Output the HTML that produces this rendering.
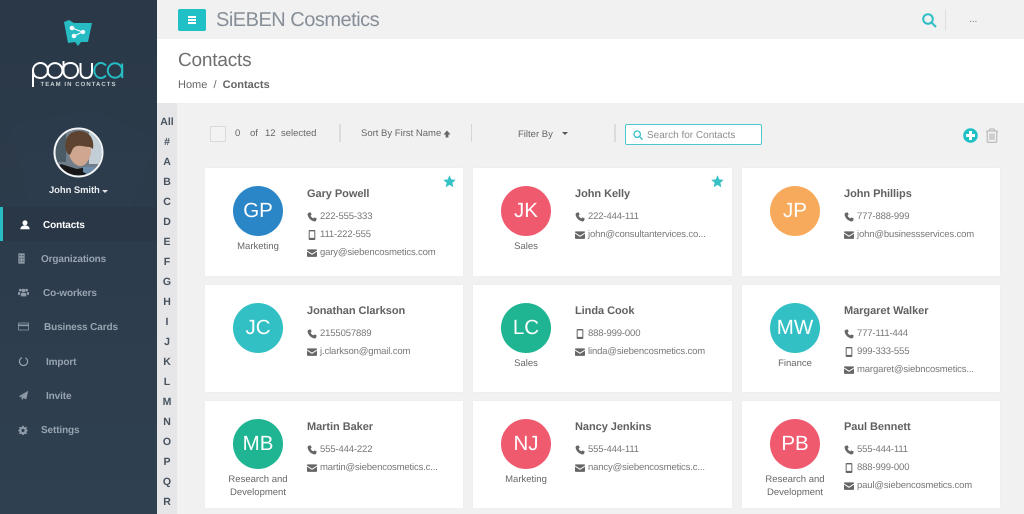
<!DOCTYPE html>
<html lang="en"><head><meta charset="utf-8"><title>Contacts</title>
<style>
*{box-sizing:border-box}
html,body{margin:0;padding:0;width:1024px;height:514px;overflow:hidden;background:#f1f1f1;font-family:"Liberation Sans",sans-serif;color:#666;text-rendering:geometricPrecision}
.a{position:absolute;white-space:nowrap}
#side{position:absolute;left:0;top:0;width:157px;height:514px;background:linear-gradient(#2a3847,#2f4051)}
.nav{position:absolute;left:0;width:157px;height:34px;line-height:34px;font-size:10px;font-weight:bold;color:#98a4b0;letter-spacing:-.12px}
.nav span{position:absolute;top:0}
.nav svg{position:absolute;left:18px;top:11px;width:11px;height:11px;fill:#8f9ba7}
#alpha{position:absolute;left:157px;top:103px;width:20px;height:411px;background:#e6e6e9}
#alpha div{position:absolute;left:0;width:20px;text-align:center;font-size:10.5px;font-weight:bold;color:#46525e;line-height:14px}
.card{position:absolute;width:258px;height:108px;background:#fff;box-shadow:0 0 1px #e4e4e4}
.av{position:absolute;left:28px;top:18px;width:50px;height:50px;border-radius:50%;color:#fff;text-align:center;line-height:50px;font-size:20.5px}
.dep{position:absolute;left:3px;width:100px;top:72px;text-align:center;font-size:9.5px;line-height:13px;color:#666}
.nm{position:absolute;left:102px;top:19.5px;font-size:11px;font-weight:bold;color:#616161;white-space:nowrap;letter-spacing:-.05px}
.ln{position:absolute;left:102px;font-size:9.5px;color:#777;white-space:nowrap;padding-left:13px;line-height:13px;letter-spacing:-.14px}
.ln svg{position:absolute;left:0;top:2px;width:10px;height:10px;fill:#666}
.st{position:absolute;left:238px;top:7px;width:13px;height:13px;fill:#35c1c6}
</style></head><body>
<svg width="0" height="0" style="position:absolute">
<symbol id="p" viewBox="0 0 12 12"><path d="M2.600.7 4.400.4 5.600 3.200 4.300 4.300C4.900 5.700 6.100 7 7.600 7.700L8.800 6.400 11.600 7.600 11.200 9.600C11 10.800 10 11.500 8.900 11.300 4.600 10.600 1.200 7 .7 3 .6 1.900 1.400 1 2.600.7Z"/></symbol>
<symbol id="m" viewBox="0 0 12 12"><path fill-rule="evenodd" d="M3.200 0H8.800C9.600 0 10 .5 10 1.200V10.800C10 11.500 9.600 12 8.800 12H3.200C2.400 12 2 11.500 2 10.800V1.200C2 .5 2.400 0 3.200 0ZM3.200 1.600V9.400H8.800V1.600Z"/></symbol>
<symbol id="e" viewBox="0 0 12 12"><path d="M0 2.600C0 2 .4 1.600 1 1.600H11C11.600 1.600 12 2 12 2.600V3L6 6.800 0 3ZM0 4.400 6 8.200 12 4.400V9.600C12 10.200 11.600 10.600 11 10.600H1C.4 10.600 0 10.200 0 9.600Z"/></symbol>
<symbol id="s" viewBox="0 0 14 14"><path d="M7 .3 8.900 4.700 13.700 5.200 10.100 8.400 11.100 13.200 7 10.700 2.900 13.200 3.900 8.400.3 5.200 5.100 4.700Z"/></symbol>
</svg>

<div id="side">
 <svg class="a" style="left:10px;top:110px" width="147" height="100" viewBox="0 0 147 100"><path d="M0 14 85 0 147 30 120 100H20Z" fill="#2f3f4f" opacity=".35"/><path d="M0 14 50 100M85 0 60 100M147 30 60 70" stroke="#2d3c4b" fill="none"/></svg>
 <svg class="a" style="left:62px;top:19px" width="34" height="28" viewBox="0 0 34 28"><path d="M2 3 7 1 12 4 30 4 26 23 19 23 16 27 13 23 6 24Z" fill="#27bcc4"/><g stroke="#fff" stroke-width="1" fill="#fff"><path d="M10 9 20.500 13 12 17" fill="none"/><circle cx="10" cy="9" r="1.800"/><circle cx="21" cy="13" r="1.600"/><circle cx="12" cy="17" r="1.800"/></g></svg>
 <svg class="a" style="left:32px;top:59px" width="94" height="30" viewBox="0 0 94 30" fill="none" stroke-width="2"><g stroke="#fff"><path d="M1 28V11.500C1 7 4.500 4 8.500 4S16 7.500 16 11.500 12.500 19 8.500 19 1.500 17 1.200 13"/><circle cx="23" cy="11.500" r="7.400"/><path d="M31.500 2V12C31.500 16.500 34.500 19 38.500 19S46 16 46 11.500 43 4 38.500 4 32.500 6 32 8"/><path d="M48.500 4V12C48.500 16.500 50.500 19 54.300 19S60 16.500 60 12V4"/></g><g stroke="#27bcc4"><path d="M74 6.500C72.500 5 71 4 69 4 65 4 62.300 7.500 62.300 11.500S65 19 69 19C71 19 72.500 18 74 16.500"/><circle cx="83" cy="11.500" r="7.200"/><path d="M90.200 4.500V19"/></g></svg>
 <div class="a" style="left:0;width:157px;top:82px;text-align:center;font-size:6px;line-height:7px;font-weight:bold;letter-spacing:1.050px;color:#c9d0d6">TEAM IN CONTACTS</div>
 <svg class="a" style="left:53px;top:127px" width="51" height="51" viewBox="0 0 51 51"><defs><clipPath id="c"><circle cx="25.500" cy="25.500" r="23"/></clipPath></defs><g clip-path="url(#c)"><rect width="51" height="51" fill="#6f7e8a"/><rect x="36" y="5" width="15" height="32" fill="#c3ced6"/><rect x="0" y="5" width="13" height="30" fill="#4c5c66"/><path d="M0 51V44L8 37 24 42 34 40 51 48V51Z" fill="#17171a"/><path d="M30 40 42 40 38 49 30 45Z" fill="#6d8cab"/><path d="M15 18C14 28 19 37 26 39 32 40 36 34 38 26L38 15Z" fill="#cfa68f"/><path d="M14 26C10 16 13 6 24 4 33 3 42 9 40 22L37 20C32 20 28 18 24 19 19 20 19 25 17 28Z" fill="#5f4331"/></g><circle cx="25.500" cy="25.500" r="24" fill="none" stroke="#f3f5f6" stroke-width="2"/></svg>
 <div class="a" style="left:49px;top:185px;font-size:9.500px;line-height:12px;font-weight:bold;color:#e9ecef;letter-spacing:-.1px">John Smith</div>
 <div class="a" style="left:102px;top:190px;border:3px solid transparent;border-top-color:#dfe3e6;border-bottom:0"></div>

 <div class="a" style="left:0;top:207px;width:157px;height:34px;background:#293746"></div>
 <div class="a" style="left:0;top:207px;width:3px;height:34px;background:#27bcc4"></div>
 <div class="nav" style="top:208.500px;color:#fff"><svg viewBox="0 0 14 14" style="left:20px;width:10px;height:10px;top:11px;fill:#fff"><circle cx="7" cy="4" r="3.500"/><path d="M.5 13C.5 9 4 7.500 7 7.500S13.500 9 13.500 13Z"/></svg><span style="left:43px">Contacts</span></div>
 <div class="nav" style="top:243px"><svg viewBox="0 0 14 14" style="left:16px;top:10px"><path fill-rule="evenodd" d="M3 .5H11V13.500H3ZM4.500 2.500V4H6V2.500ZM8 2.500V4H9.500V2.500ZM4.500 6V7.500H6V6ZM8 6V7.500H9.500V6ZM4.500 9.500V11H6V9.500ZM8 9.500V11H9.500V9.500Z"/></svg><span style="left:41px">Organizations</span></div>
 <div class="nav" style="top:277px"><svg viewBox="0 0 14 14" style="top:10px"><circle cx="3" cy="4" r="1.800"/><circle cx="11" cy="4" r="1.800"/><circle cx="7" cy="4.500" r="2.300"/><path d="M0 6.500H2.500L2.500 10H0ZM11.500 6.500H14V10H11.500ZM3.500 7.500H10.500V12H3.500Z"/></svg><span style="left:43px">Co-workers</span></div>
 <div class="nav" style="top:311px"><svg viewBox="0 0 14 14" style="top:10px"><path fill-rule="evenodd" d="M1 2H13C13.600 2 14 2.400 14 3V11C14 11.600 13.600 12 13 12H1C.4 12 0 11.600 0 11V3C0 2.400.4 2 1 2ZM1 3V4.500H13V3ZM1 6.500V11H13V6.500Z"/></svg><span style="left:44px">Business Cards</span></div>
 <div class="nav" style="top:345.500px"><svg viewBox="0 0 14 14" style="top:10px;fill:none;stroke:#98a4b0;stroke-width:1.500"><path d="M5 2.200A5.200 5.200 0 1 0 9.500 2.400"/></svg><span style="left:46px">Import</span></div>
 <div class="nav" style="top:380px"><svg viewBox="0 0 14 14" style="top:10px"><path d="M13 1 10.500 12 7 10.300 5 13 4.500 9ZM13 1 1 8 4 9.300Z"/></svg><span style="left:46px">Invite</span></div>
 <div class="nav" style="top:414px"><svg viewBox="0 0 14 14" style="width:10px;height:10px;top:11px"><path fill-rule="evenodd" d="M6 1H8L8.400 2.700 9.800 3.300 11.300 2.400 12.600 3.700 11.700 5.200 12.300 6.600 13.500 7V8.500L12.300 9 11.700 10.300 12.600 11.800 11.300 13 9.800 12.200 8.400 12.800 8 14H6L5.600 12.800 4.200 12.200 2.700 13 1.400 11.800 2.300 10.300 1.700 9 .5 8.500V7L1.700 6.600 2.300 5.200 1.400 3.700 2.700 2.400 4.200 3.300 5.600 2.700ZM7 5.500A2.200 2.200 0 1 0 7 9.900 2.200 2.200 0 1 0 7 5.500Z"/></svg><span style="left:41px">Settings</span></div>
</div>

<!-- top bar -->
<div class="a" style="left:178px;top:9px;width:28px;height:22px;background:#20c1c6;border-radius:2px"></div>
<div class="a" style="left:188px;top:16px;width:8px;height:1.500px;background:#fff;box-shadow:0 3px 0 #fff,0 6px 0 #fff"></div>
<div class="a" style="left:216px;top:6px;font-size:20px;line-height:28px;color:#868e98;letter-spacing:-.5px">SiEBEN Cosmetics</div>
<svg class="a" style="left:921px;top:12px" width="16" height="16" viewBox="0 0 16 16" fill="none" stroke="#2fbfc6" stroke-width="2"><circle cx="7" cy="7" r="4.800"/><path d="M10.500 10.500 15 15"/></svg>
<div class="a" style="left:945px;top:9px;width:1px;height:21px;background:#dedede"></div>
<div class="a" style="left:969px;top:13px;font-size:10px;line-height:14px;color:#777">...</div>

<!-- heading -->
<div class="a" style="left:157px;top:39px;width:867px;height:64px;background:#fff"></div>
<div class="a" style="left:178px;top:48px;font-size:19px;line-height:26px;color:#707070;letter-spacing:-.2px">Contacts</div>
<div class="a" style="left:178px;top:78px;font-size:11px;line-height:15px;color:#666">Home&nbsp; /&nbsp; <b>Contacts</b></div>

<div id="alpha">
<div style="top:12px">All</div><div style="top:32px">#</div><div style="top:52px">A</div><div style="top:72px">B</div><div style="top:92px">C</div><div style="top:112px">D</div><div style="top:132px">E</div><div style="top:152px">F</div><div style="top:172px">G</div><div style="top:192px">H</div><div style="top:212px">I</div><div style="top:232px">J</div><div style="top:252px">K</div><div style="top:272px">L</div><div style="top:292px">M</div><div style="top:312px">N</div><div style="top:332px">O</div><div style="top:352px">P</div><div style="top:372px">Q</div><div style="top:392px">R</div>
</div>

<!-- toolbar -->
<div class="a" style="left:210px;top:126px;width:16px;height:16px;border:1px solid #d9d9d9;background:#f3f3f3"></div>
<div class="a" style="left:235px;top:127px;font-size:9.500px;line-height:13px;color:#666">0</div>
<div class="a" style="left:250px;top:127px;font-size:9.500px;line-height:13px;color:#666">of</div>
<div class="a" style="left:265px;top:127px;font-size:9.500px;line-height:13px;color:#666">12</div>
<div class="a" style="left:281px;top:127px;font-size:9.500px;line-height:13px;color:#666">selected</div>
<div class="a" style="left:339px;top:124px;width:1.500px;height:18px;background:#dcdcdc"></div>
<div class="a" style="left:361px;top:127px;font-size:9.500px;line-height:13px;color:#666">Sort By First Name</div>
<svg class="a" style="left:443px;top:130px" width="8" height="8" viewBox="0 0 8 8" fill="#666"><path d="M4 .5 7.500 4.500H5.400V7.500H2.600V4.500H.5Z"/></svg>
<div class="a" style="left:471px;top:124px;width:1px;height:18px;background:#d5d5d5"></div>
<div class="a" style="left:518px;top:128px;font-size:9.500px;line-height:13px;color:#666">Filter By</div>
<div class="a" style="left:562px;top:132px;border:3px solid transparent;border-top:3.500px solid #555;border-bottom:0"></div>
<div class="a" style="left:614px;top:124px;width:1.500px;height:18px;background:#dcdcdc"></div>
<div class="a" style="left:625px;top:124px;width:137px;height:21px;background:#fff;border:1px solid #4fc7cd;border-radius:2px"></div>
<svg class="a" style="left:633px;top:130px" width="10" height="10" viewBox="0 0 10 10" fill="none" stroke="#2fbfc6" stroke-width="1.300"><circle cx="4.200" cy="4.200" r="3.200"/><path d="M6.500 6.500 9.500 9.500"/></svg>
<div class="a" style="left:647px;top:129px;font-size:10px;line-height:13px;color:#8d8d8d">Search for Contacts</div>
<svg class="a" style="left:963px;top:128px" width="15" height="15" viewBox="0 0 15 15"><circle cx="7.500" cy="7.500" r="7.300" fill="#20c1c6"/><path d="M6 3H9V6H12V9H9V12H6V9H3V6H6Z" fill="#fff"/></svg>
<svg class="a" style="left:985px;top:128px" width="14" height="15" viewBox="0 0 14 15" fill="none" stroke="#b4b4b4" stroke-width="1.100"><path d="M1 3H13M4.500 3 5 1H9L9.500 3M2.200 3V13C2.200 13.800 2.700 14.300 3.300 14.300H10.700C11.300 14.300 11.800 13.800 11.800 13V3M5 5.500V12M7 5.500V12M9 5.500V12"/></svg>

<!-- cards -->
<div class="card" style="left:205px;top:168px"><div class="av" style="background:#2a86c6">GP</div><div class="dep">Marketing</div><div class="nm">Gary Powell</div><svg class="st"><use href="#s"/></svg>
<div class="ln" style="top:42px"><svg><use href="#p"/></svg>222-555-333</div><div class="ln" style="top:60px"><svg><use href="#m"/></svg>111-222-555</div><div class="ln" style="top:78px"><svg><use href="#e"/></svg>gary@siebencosmetics.com</div></div>

<div class="card" style="left:473px;top:168px;width:259px"><div class="av" style="background:#ef5a6f">JK</div><div class="dep">Sales</div><div class="nm">John Kelly</div><svg class="st"><use href="#s"/></svg>
<div class="ln" style="top:42px"><svg><use href="#p"/></svg>222-444-111</div><div class="ln" style="top:60px"><svg><use href="#e"/></svg>john@consultantervices.co...</div></div>

<div class="card" style="left:742px;top:168px"><div class="av" style="background:#f7aa5c">JP</div><div class="nm">John Phillips</div>
<div class="ln" style="top:42px"><svg><use href="#p"/></svg>777-888-999</div><div class="ln" style="top:60px"><svg><use href="#e"/></svg>john@businessservices.com</div></div>

<div class="card" style="left:205px;top:285px;height:107px"><div class="av" style="background:#33c0c4">JC</div><div class="nm">Jonathan Clarkson</div>
<div class="ln" style="top:42px"><svg><use href="#p"/></svg>2155057889</div><div class="ln" style="top:60px"><svg><use href="#e"/></svg>j.clarkson@gmail.com</div></div>

<div class="card" style="left:473px;top:285px;width:259px;height:107px"><div class="av" style="background:#1fb492">LC</div><div class="dep">Sales</div><div class="nm">Linda Cook</div>
<div class="ln" style="top:42px"><svg><use href="#m"/></svg>888-999-000</div><div class="ln" style="top:60px"><svg><use href="#e"/></svg>linda@siebencosmetics.com</div></div>

<div class="card" style="left:742px;top:285px;height:107px"><div class="av" style="background:#33c0c4">MW</div><div class="dep">Finance</div><div class="nm">Margaret Walker</div>
<div class="ln" style="top:42px"><svg><use href="#p"/></svg>777-111-444</div><div class="ln" style="top:60px"><svg><use href="#m"/></svg>999-333-555</div><div class="ln" style="top:78px"><svg><use href="#e"/></svg>margaret@siebncosmetics...</div></div>

<div class="card" style="left:205px;top:401px;height:107px"><div class="av" style="background:#1fb492">MB</div><div class="dep">Research and<br>Development</div><div class="nm">Martin Baker</div>
<div class="ln" style="top:42px"><svg><use href="#p"/></svg>555-444-222</div><div class="ln" style="top:60px"><svg><use href="#e"/></svg>martin@siebencosmetics.c...</div></div>

<div class="card" style="left:473px;top:401px;width:259px;height:107px"><div class="av" style="background:#ef5a6f">NJ</div><div class="dep">Marketing</div><div class="nm">Nancy Jenkins</div>
<div class="ln" style="top:42px"><svg><use href="#p"/></svg>555-444-111</div><div class="ln" style="top:60px"><svg><use href="#e"/></svg>nancy@siebencosmetics.c...</div></div>

<div class="card" style="left:742px;top:401px;height:107px"><div class="av" style="background:#ef5a6f">PB</div><div class="dep">Research and<br>Development</div><div class="nm">Paul Bennett</div>
<div class="ln" style="top:42px"><svg><use href="#p"/></svg>555-444-111</div><div class="ln" style="top:60px"><svg><use href="#m"/></svg>888-999-000</div><div class="ln" style="top:78px"><svg><use href="#e"/></svg>paul@siebencosmetics.com</div></div>
</body></html>
